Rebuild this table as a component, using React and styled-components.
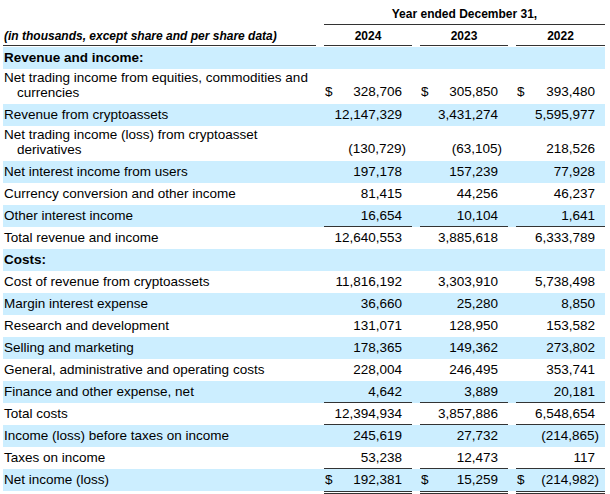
import React from 'react'
import styled, { createGlobalStyle, css } from 'styled-components'

const GlobalStyle = createGlobalStyle`
    body {
        margin: 0;
        background: #fff;
        color: #000;
        font-family: "Liberation Sans", Arial, sans-serif;
        font-size: 13.5px;
    }
`

const BLUE = '#cceeff'
const RULE = '#333'

const rows = [
    { label: 'Revenue and income:', section: true },
    { label: 'Net trading income from equities, commodities and currencies', values: ['328,706', '305,850', '393,480'], dollar: true, tall: true },
    { label: 'Revenue from cryptoassets', values: ['12,147,329', '3,431,274', '5,595,977'] },
    { label: 'Net trading income (loss) from cryptoasset derivatives', values: ['(130,729)', '(63,105)', '218,526'], tall: true },
    { label: 'Net interest income from users', values: ['197,178', '157,239', '77,928'] },
    { label: 'Currency conversion and other income', values: ['81,415', '44,256', '46,237'] },
    { label: 'Other interest income', values: ['16,654', '10,104', '1,641'], underline: true },
    { label: 'Total revenue and income', values: ['12,640,553', '3,885,618', '6,333,789'] },
    { label: 'Costs:', section: true },
    { label: 'Cost of revenue from cryptoassets', values: ['11,816,192', '3,303,910', '5,738,498'] },
    { label: 'Margin interest expense', values: ['36,660', '25,280', '8,850'] },
    { label: 'Research and development', values: ['131,071', '128,950', '153,582'] },
    { label: 'Selling and marketing', values: ['178,365', '149,362', '273,802'] },
    { label: 'General, administrative and operating costs', values: ['228,004', '246,495', '353,741'] },
    { label: 'Finance and other expense, net', values: ['4,642', '3,889', '20,181'], underline: true },
    { label: 'Total costs', values: ['12,394,934', '3,857,886', '6,548,654'], underline: true },
    { label: 'Income (loss) before taxes on income', values: ['245,619', '27,732', '(214,865)'] },
    { label: 'Taxes on income', values: ['53,238', '12,473', '117'], underline: true },
    { label: 'Net income (loss)', values: ['192,381', '15,259', '(214,982)'], dollar: true, double: true },
]

const Amount = ({ value }) => {
    if (value.startsWith('(')) {
        return (
            <Number>
                {value.slice(0, -1)}
                <Paren>)</Paren>
            </Number>
        )
    }
    return <Number>{value}</Number>
}

const App = () => {
    return (
        <>
            <GlobalStyle />
            <Table>
                <TopHead>
                    <span />
                    <SpanHead>Year ended December 31,</SpanHead>
                </TopHead>
                <YearHead>
                    <UnitLabel>(in thousands, except share and per share data)</UnitLabel>
                    <Year>2024</Year>
                    <Year>2023</Year>
                    <Year>2022</Year>
                </YearHead>
                {rows.map((row, i) => (
                    <Row key={row.label} blue={i % 2 === 0} tall={row.tall} double={row.double}>
                        <Label section={row.section} tall={row.tall}>{row.label}</Label>
                        {(row.values || ['', '', '']).map((v, j) => (
                            <Value key={j} tall={row.tall} underline={row.underline} double={row.double}>
                                <Dollar>{row.dollar ? '$' : ''}</Dollar>
                                {v && <Amount value={v} />}
                            </Value>
                        ))}
                    </Row>
                ))}
            </Table>
        </>
    )
}

const columns = css`
    display: grid;
    grid-template-columns: 313px 88px 88px 89px;
    column-gap: 8px;
`

const Table = styled.div`
    width: 602px;
    margin-left: 3px;
`

const TopHead = styled.div`
    ${columns};
    height: 25px;
    font-size: 12px;
`

const SpanHead = styled.div`
    grid-column: 2 / 5;
    box-sizing: border-box;
    padding-top: 6px;
    line-height: 16px;
    text-align: center;
    font-weight: bold;
    border-bottom: 1px solid ${RULE};
`

const YearHead = styled.div`
    ${columns};
    height: 21px;
    margin-bottom: 1px;
    font-size: 12px;
    font-weight: bold;
    line-height: 16px;

    & > * {
        box-sizing: border-box;
        padding-top: 3px;
        border-bottom: 1px solid ${RULE};
    }
`

const UnitLabel = styled.div`
    font-style: italic;
    padding-left: 1px;
    white-space: nowrap;
`

const Year = styled.div`
    text-align: center;
`

const Row = styled.div`
    ${columns};
    height: ${({ tall, double }) => (tall ? 35 : double ? 25 : 22)}px;
    line-height: 16px;
    background: ${({ blue, double }) =>
        !blue ? 'transparent' : double ? `linear-gradient(${BLUE}, ${BLUE}) top left / 100% 22px no-repeat` : BLUE};
`

const Label = styled.div`
    box-sizing: border-box;
    padding: ${({ tall }) => (tall ? 1 : 3)}px 0 0 14px;
    line-height: ${({ tall }) => (tall ? 15 : 16)}px;
    text-indent: -13px;
    font-weight: ${({ section }) => (section ? 'bold' : 'normal')};
`

const Value = styled.div`
    box-sizing: border-box;
    display: flex;
    align-items: flex-end;
    justify-content: space-between;
    padding: 0 10px ${({ tall }) => (tall ? 4 : 3)}px 1px;
    white-space: nowrap;
    box-shadow: ${({ underline }) => (underline ? `inset 0 -1px 0 ${RULE}` : 'none')};
    border-bottom: ${({ double }) => (double ? `3px double ${RULE}` : 'none')};
`

const Dollar = styled.span``

const Number = styled.span`
    text-align: right;
`

const Paren = styled.span`
    margin-right: -4px;
`

export default App
